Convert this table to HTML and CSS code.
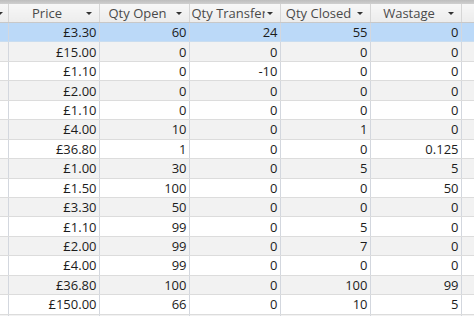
FILE: index.html
```html
<!DOCTYPE html>
<html>
<head>
<meta charset="utf-8">
<link rel="stylesheet" href="styles.css">
</head>
<body>
<div class="topbar"></div>
<table class="grid">
  <colgroup>
    <col class="c0"><col class="c1"><col class="c2"><col class="c3"><col class="c4"><col class="c5"><col class="c6">
  </colgroup>
  <thead>
    <tr>
      <th class="stub"><span class="arrow stub-arrow"></span></th>
      <th><div class="hd"><span class="lbl">Price</span><span class="dd"><span class="arrow"></span></span></div></th>
      <th><div class="hd"><span class="lbl">Qty Open</span><span class="dd"><span class="arrow"></span></span></div></th>
      <th><div class="hd"><span class="lbl">Qty Transfer</span><span class="dd"><span class="arrow"></span></span></div></th>
      <th><div class="hd"><span class="lbl">Qty Closed</span><span class="dd"><span class="arrow"></span></span></div></th>
      <th><div class="hd"><span class="lbl">Wastage</span><span class="dd"><span class="arrow"></span></span></div></th>
      <th class="rest"></th>
    </tr>
  </thead>
  <tbody>
    <tr class="sel"><td></td><td>£3.30</td><td>60</td><td>24</td><td>55</td><td>0</td><td class="rest"></td></tr>
    <tr class="alt"><td></td><td>£15.00</td><td>0</td><td>0</td><td>0</td><td>0</td><td class="rest"></td></tr>
    <tr><td></td><td>£1.10</td><td>0</td><td>-10</td><td>0</td><td>0</td><td class="rest"></td></tr>
    <tr class="alt"><td></td><td>£2.00</td><td>0</td><td>0</td><td>0</td><td>0</td><td class="rest"></td></tr>
    <tr><td></td><td>£1.10</td><td>0</td><td>0</td><td>0</td><td>0</td><td class="rest"></td></tr>
    <tr class="alt"><td></td><td>£4.00</td><td>10</td><td>0</td><td>1</td><td>0</td><td class="rest"></td></tr>
    <tr><td></td><td>£36.80</td><td>1</td><td>0</td><td>0</td><td>0.125</td><td class="rest"></td></tr>
    <tr class="alt"><td></td><td>£1.00</td><td>30</td><td>0</td><td>5</td><td>5</td><td class="rest"></td></tr>
    <tr><td></td><td>£1.50</td><td>100</td><td>0</td><td>0</td><td>50</td><td class="rest"></td></tr>
    <tr class="alt"><td></td><td>£3.30</td><td>50</td><td>0</td><td>0</td><td>0</td><td class="rest"></td></tr>
    <tr><td></td><td>£1.10</td><td>99</td><td>0</td><td>5</td><td>0</td><td class="rest"></td></tr>
    <tr class="alt"><td></td><td>£2.00</td><td>99</td><td>0</td><td>7</td><td>0</td><td class="rest"></td></tr>
    <tr><td></td><td>£4.00</td><td>99</td><td>0</td><td>0</td><td>0</td><td class="rest"></td></tr>
    <tr class="alt"><td></td><td>£36.80</td><td>100</td><td>0</td><td>100</td><td>99</td><td class="rest"></td></tr>
    <tr><td></td><td>£150.00</td><td>66</td><td>0</td><td>10</td><td>5</td><td class="rest"></td></tr>
    <tr class="alt"><td></td><td></td><td></td><td></td><td></td><td></td><td class="rest"></td></tr>
  </tbody>
</table>
</body>
</html>
```
FILE: styles.css
```css
html, body {
  margin: 0;
  padding: 0;
  width: 474px;
  height: 316px;
  overflow: hidden;
  background: #ffffff;
}

body {
  font-family: "Open Sans", "Noto Sans", "Liberation Sans", sans-serif;
  font-size: 13px;
  color: #1c1c1c;
}

.topbar {
  height: 4px;
  background: linear-gradient(#bdbdbd, #cfcfcf);
}

.grid {
  border-collapse: collapse;
  table-layout: fixed;
  width: 480px;
}

.c0 { width: 8px; }
.c1 { width: 91px; }
.c2 { width: 90px; }
.c3 { width: 91px; }
.c4 { width: 90px; }
.c5 { width: 91px; }
.c6 { width: 19px; }

.grid th {
  height: 18px;
  padding: 0;
  background: linear-gradient(#f7f7f7, #ececec);
  border-right: 1px solid #d6d6d6;
  border-bottom: 1px solid #c8c8c8;
  font-weight: normal;
  color: #4a4a4a;
  overflow: hidden;
  position: relative;
}

.grid th.rest {
  border-right: none;
}

.hd {
  display: flex;
  align-items: center;
  height: 18px;
}

.lbl {
  flex: 1;
  min-width: 0;
  text-align: center;
  white-space: nowrap;
  overflow: hidden;
  padding-left: 2px;
}

.dd {
  width: 15px;
  flex: none;
  display: flex;
  align-items: center;
  padding-left: 2px;
  box-sizing: border-box;
}

.arrow {
  display: block;
  width: 0;
  height: 0;
  border-left: 3px solid transparent;
  border-right: 3px solid transparent;
  border-top: 3.5px solid #333333;
}

.stub-arrow {
  position: absolute;
  left: -3px;
  top: 8px;
}

.grid td {
  height: 18.45px;
  padding: 0 2px 0 0;
  text-align: right;
  white-space: nowrap;
  overflow: hidden;
  border-right: 1px solid #d3d7de;
  border-bottom: 1px solid #dcdcdc;
  background: #ffffff;
}

.grid td.rest {
  border-right: none;
}

.grid tr.alt td {
  background: #f2f2f2;
}

.grid tr.sel td {
  background: #bbd9f8;
  border-bottom-color: #c9ddf0;
}
```
